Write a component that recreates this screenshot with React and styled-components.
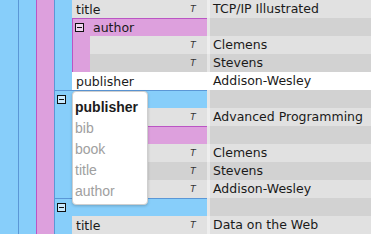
import React from 'react';
import styled, { createGlobalStyle } from 'styled-components';

const BLUE = '#87cefa';
const BLUE_EDGE = '#5b97d6';
const PINK = '#dda0dd';
const PINK_EDGE = '#bb55c4';
const SHADES = { light: '#e1e1e1', dark: '#d2d2d2', white: '#ffffff' };

const GlobalStyle = createGlobalStyle`
  html, body {
    margin: 0;
    padding: 0;
    background: #fff;
  }
  body {
    font-family: "DejaVu Sans", Verdana, sans-serif;
    font-size: 12.5px;
    color: #1a1a1a;
  }
`;

const Grid = styled.div`
  position: relative;
  display: flex;
  width: 371px;
  height: 234px;
  overflow: hidden;
`;

const TreePane = styled.div`
  width: 207px;
  flex-shrink: 0;
`;

const ValuePane = styled.div`
  flex: 1;
  display: flex;
  flex-direction: column;
`;

const Group = styled.div`
  display: flex;
  flex-direction: column;
  background: ${({ $bg }) => $bg};
  border-left: 1px solid ${({ $edge }) => $edge};
  border-top: ${({ $open, $edge }) => ($open ? `1px solid ${$edge}` : 'none')};
`;

const GroupHeader = styled.div`
  display: flex;
  align-items: center;
  height: 17px;
`;

const Toggle = styled.div`
  width: 17px;
  flex-shrink: 0;
  display: flex;
  align-items: center;
  padding-left: 2px;
  box-sizing: border-box;
`;

const MinusBox = styled.span`
  position: relative;
  width: 9px;
  height: 9px;
  box-sizing: border-box;
  border: 1px solid #111;
  background: rgba(255, 255, 255, 0.55);

  &::after {
    content: '';
    position: absolute;
    left: 1px;
    right: 1px;
    top: 3px;
    height: 1px;
    background: #111;
  }
`;

const GroupLabel = styled.span`
  padding-left: 3px;
  line-height: 17px;
`;

const Body = styled.div`
  display: flex;
`;

const Strip = styled.div`
  width: 17px;
  flex-shrink: 0;
`;

const Children = styled.div`
  flex: 1;
  min-width: 0;
  display: flex;
  flex-direction: column;
`;

const Leaf = styled.div`
  position: relative;
  display: flex;
  align-items: center;
  height: 18px;
  padding-left: 4px;
  background: ${({ $shade }) => SHADES[$shade]};
`;

const LeafName = styled.span`
  flex: 1;
  white-space: nowrap;
`;

const TypeMark = styled.span`
  width: 10px;
  margin-right: 9px;
  text-align: center;
  font-size: 9px;
  font-style: italic;
  color: #333;
`;

const ValueCell = styled.div`
  height: 18px;
  line-height: 18px;
  padding-left: 3px;
  border-left: 3px solid rgba(255, 255, 255, 0.45);
  background: ${({ $shade }) => SHADES[$shade]};
  white-space: nowrap;
  overflow: hidden;
`;

const Suggest = styled.ul`
  position: absolute;
  left: 0;
  top: calc(100% + 1px);
  z-index: 5;
  box-sizing: border-box;
  width: 76px;
  margin: 0;
  padding: 5px 0 2px;
  list-style: none;
  background: #fff;
  border: 1px solid #cfcfcf;
  border-radius: 4px;
  box-shadow: 0 1px 3px rgba(0, 0, 0, 0.2);
  font-family: "Liberation Sans", Arial, sans-serif;
  font-size: 14px;
`;

const Option = styled.li`
  height: 21px;
  line-height: 21px;
  padding-left: 2px;
  color: ${({ $active }) => ($active ? '#1c1c1c' : '#a0a0a0')};
  font-weight: ${({ $active }) => ($active ? 700 : 400)};
`;

const suggestions = ['publisher', 'bib', 'book', 'title', 'author'];

const values = [
  ['light', 'TCP/IP Illustrated'],
  ['dark', ''],
  ['light', 'Clemens'],
  ['dark', 'Stevens'],
  ['white', 'Addison-Wesley'],
  ['dark', ''],
  ['light', 'Advanced Programming'],
  ['dark', ''],
  ['light', 'Clemens'],
  ['dark', 'Stevens'],
  ['light', 'Addison-Wesley'],
  ['dark', ''],
  ['light', 'Data on the Web'],
];

function Branch({ bg, edge, open, label, children }) {
  return (
    <Group $bg={bg} $edge={edge} $open={open}>
      {open && (
        <GroupHeader>
          <Toggle>
            <MinusBox />
          </Toggle>
          {label && <GroupLabel>{label}</GroupLabel>}
        </GroupHeader>
      )}
      <Body>
        <Strip />
        <Children>{children}</Children>
      </Body>
    </Group>
  );
}

function Row({ shade, name, text = true, children }) {
  return (
    <Leaf $shade={shade}>
      <LeafName>{name}</LeafName>
      {text && <TypeMark>T</TypeMark>}
      {children}
    </Leaf>
  );
}

function Author({ first, second }) {
  return (
    <Branch bg={PINK} edge={PINK_EDGE} open label="author">
      <Row shade={first} />
      <Row shade={second} />
    </Branch>
  );
}

export default function App() {
  return (
    <>
      <GlobalStyle />
      <Grid>
        <TreePane>
          <Branch bg={BLUE} edge={BLUE}>
            <Branch bg={BLUE} edge={BLUE_EDGE}>
              <Branch bg={PINK} edge={PINK_EDGE}>
                <Branch bg={BLUE} edge={BLUE_EDGE}>
                  <Row shade="light" name="title" />
                  <Author first="light" second="dark" />
                  <Row shade="white" name="publisher" text={false}>
                    <Suggest>
                      {suggestions.map((s, i) => (
                        <Option key={s} $active={i === 0}>{s}</Option>
                      ))}
                    </Suggest>
                  </Row>
                </Branch>
                <Branch bg={BLUE} edge={BLUE_EDGE} open>
                  <Row shade="light" name="title" />
                  <Author first="light" second="dark" />
                  <Row shade="light" name="publisher" />
                </Branch>
                <Branch bg={BLUE} edge={BLUE_EDGE} open>
                  <Row shade="light" name="title" />
                </Branch>
              </Branch>
            </Branch>
          </Branch>
        </TreePane>
        <ValuePane>
          {values.map(([shade, text], i) => (
            <ValueCell key={i} $shade={shade}>{text}</ValueCell>
          ))}
        </ValuePane>
      </Grid>
    </>
  );
}
